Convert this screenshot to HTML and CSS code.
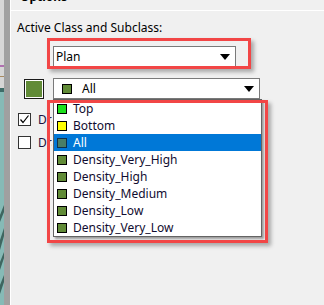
FILE: index.html
```html
<!DOCTYPE html>
<html>
<head>
<meta charset="utf-8">
<link rel="stylesheet" href="styles.css">
</head>
<body>
<div class="screen">
  <div class="edge">
    <svg width="4" height="305" viewBox="0 0 4 305">
      <rect x="0" y="0" width="4" height="305" fill="#d6d6d6"/>
      <rect x="0" y="65" width="4" height="2" fill="#b070b0"/>
      <rect x="0" y="76" width="4" height="1" fill="#a88a60"/>
      <rect x="0" y="88" width="4" height="4" fill="#3e6c68"/>
      <rect x="0" y="92" width="4" height="213" fill="#86bab6"/>
      <path d="M0 215 L4 205 L4 212 L0 222 Z" fill="#3e6660"/>
      <path d="M0 240 L4 228 L4 236 L0 250 Z" fill="#3e6660"/>
      <path d="M0 262 L4 252 L4 258 L0 270 Z" fill="#3e6660"/>
      <path d="M0 285 L4 275 L4 282 L0 294 Z" fill="#3e6660"/>
    </svg>
  </div>
  <div class="divider"></div>
  <div class="panel">
    <div class="header"><span class="title">Options</span></div>
    <div class="label">Active Class and Subclass:</div>
    <div class="combo combo-plan">
      <span class="combo-text">Plan</span>
      <span class="arrow"></span>
    </div>
    <div class="sub-row">
      <div class="swatch"></div>
      <div class="combo combo-sub">
        <span class="sq sq-olive"></span>
        <span class="combo-text">All</span>
        <span class="arrow"></span>
      </div>
    </div>
    <div class="check-row">
      <span class="checkbox">
        <svg width="11" height="11" viewBox="0 0 11 11"><path d="M1.5 5.5 L4 8.5 L9.5 1.5" fill="none" stroke="#000" stroke-width="1.2"/></svg>
      </span>
      <span class="check-text">Draw Only Active Subclass</span>
    </div>
    <div class="check-row">
      <span class="checkbox"></span>
      <span class="check-text">Draw Other Subclasses</span>
    </div>

    <ul class="dropdown">
      <li class="item"><span class="sq sq-green"></span>Top</li>
      <li class="item"><span class="sq sq-yellow"></span>Bottom</li>
      <li class="item selected"><span class="sq sq-sel"></span>All</li>
      <li class="item"><span class="sq sq-olive"></span>Density_Very_High</li>
      <li class="item"><span class="sq sq-olive"></span>Density_High</li>
      <li class="item"><span class="sq sq-olive"></span>Density_Medium</li>
      <li class="item"><span class="sq sq-olive"></span>Density_Low</li>
      <li class="item"><span class="sq sq-olive"></span>Density_Very_Low</li>
    </ul>

    <div class="callout callout-plan"></div>
    <div class="callout callout-list"></div>
  </div>
</div>
</body>
</html>
```

FILE: styles.css
```css
* { box-sizing: border-box; }

html, body {
  margin: 0;
  padding: 0;
}

body {
  width: 324px;
  height: 305px;
  overflow: hidden;
  background: #f0f0f0;
  font-family: "Noto Sans", "Open Sans", sans-serif;
  font-size: 12px;
  line-height: 16px;
  color: #000;
}

.screen {
  display: flex;
  width: 324px;
  height: 305px;
}

.edge {
  width: 4px;
  height: 305px;
  flex: none;
}

.edge svg { display: block; }

.divider {
  width: 6px;
  flex: none;
  background: #a0a0a0;
}

.panel {
  position: relative;
  flex: 1;
  background: #f0f0f0;
  border-left: 1px solid #ffffff;
}

.header {
  height: 11px;
  border-bottom: 1px solid #ffffff;
  overflow: hidden;
  padding-left: 9px;
}

.title {
  display: block;
  font-weight: bold;
  margin-top: -11px;
  line-height: 16px;
  font-size: 12px;
}

.label {
  margin: 9px 0 0 6px;
  height: 16px;
  white-space: nowrap;
}

.combo {
  position: relative;
  display: flex;
  align-items: center;
  background: #fff;
  border: 1px solid #7a7a7a;
}

.combo-plan {
  margin: 10px 0 0 42px;
  width: 183px;
  height: 22px;
  padding-left: 2px;
}

.combo-text {
  white-space: nowrap;
}

.arrow {
  position: absolute;
  right: 5px;
  top: 50%;
  margin-top: -3px;
  width: 0;
  height: 0;
  border-left: 5px solid transparent;
  border-right: 5px solid transparent;
  border-top: 6px solid #000;
}

.sub-row {
  display: flex;
  align-items: center;
  margin-top: 10px;
  height: 21px;
}

.swatch {
  width: 20px;
  height: 20px;
  margin-left: 13px;
  border: 1px solid #1a1a1a;
  box-shadow: inset 0 0 0 1px #ffffff;
  background: #618b37;
  margin-top: 1px;
}

.combo-sub {
  margin-left: 9px;
  width: 207px;
  height: 21px;
  padding-left: 8px;
}

.combo-sub .combo-text {
  margin-left: 10px;
}

.sq {
  display: inline-block;
  flex: none;
  width: 10px;
  height: 10px;
  border: 1px solid #000;
}

.sq-olive { background: #618b37; }
.sq-green { background: #1ee01e; }
.sq-yellow { background: #ffff00; }
.sq-sel { background: #4a7e66; border-color: #10304a; }

.check-row {
  display: flex;
  align-items: center;
  height: 13px;
  margin: 14px 0 0 7px;
  white-space: nowrap;
}

.check-row + .check-row {
  margin-top: 10px;
}

.checkbox {
  width: 13px;
  height: 13px;
  flex: none;
  border: 1px solid #333;
  background: #fff;
  display: flex;
  align-items: center;
  justify-content: center;
}

.checkbox svg { display: block; }

.check-text {
  margin-left: 7px;
  width: 14px;
  overflow: hidden;
  color: #1a1040;
}

.dropdown {
  position: absolute;
  left: 42px;
  top: 99px;
  width: 209px;
  margin: 0;
  padding: 0;
  list-style: none;
  background: #fff;
  border: 1px solid #646464;
  box-shadow: 2px 2px 2px rgba(0, 0, 0, 0.35);
}

.item {
  display: flex;
  align-items: center;
  height: 17px;
  padding-left: 3px;
  white-space: nowrap;
  color: #100c30;
}

.item .sq {
  margin-right: 6px;
}

.item.selected {
  background: #0078d7;
  color: #fff;
}

.callout {
  position: absolute;
  border: 3px solid #f24646;
  box-shadow: 3px 3px 4px rgba(0, 0, 0, 0.3);
  pointer-events: none;
}

.callout-plan {
  left: 36px;
  top: 38px;
  width: 204px;
  height: 31px;
}

.callout-list {
  left: 36px;
  top: 100px;
  width: 221px;
  height: 143px;
}
```
